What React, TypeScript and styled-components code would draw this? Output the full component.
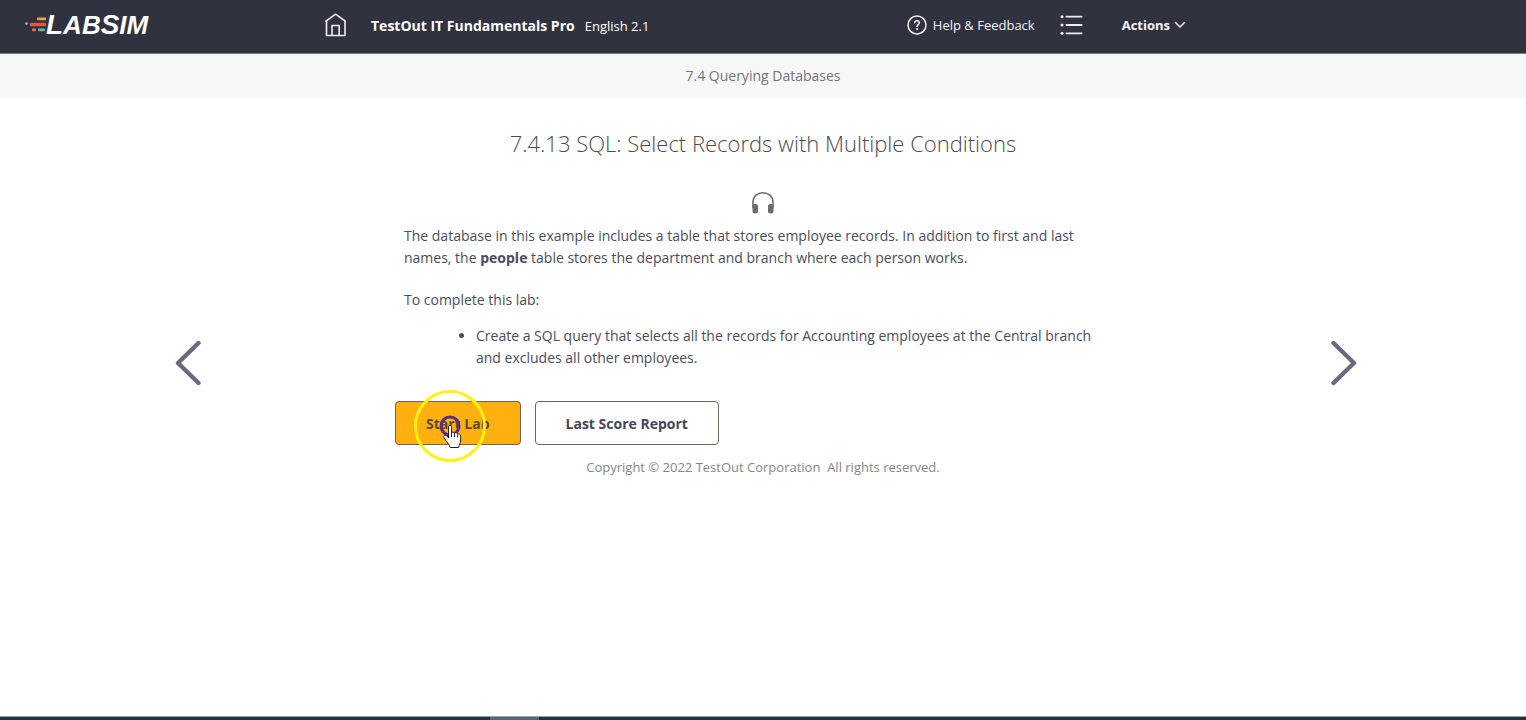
import React from "react";
import styled, { createGlobalStyle } from "styled-components";

const GlobalStyle = createGlobalStyle`
  *, *::before, *::after { box-sizing: border-box; }
  body {
    margin: 0;
    background: #fff;
    color: #4a4c5c;
    font-family: "Open Sans", "Noto Sans", sans-serif;
    font-size: 14px;
  }
  h1, h2, p, ul { margin: 0; font-weight: inherit; }
  button { font: inherit; color: inherit; cursor: pointer; }
  svg { display: block; flex: none; }
`;

const Page = styled.div`
  min-height: 100vh;
  display: flex;
  flex-direction: column;
`;

const TopBar = styled.header`
  display: grid;
  grid-template-columns: 1fr minmax(auto, 876px) 1fr;
  align-items: center;
  height: 54px;
  padding-bottom: 3px;
  background: #31323f;
  border-bottom: 1px solid #77787f;
  color: #fff;
`;

const Brand = styled.a`
  display: flex;
  align-items: center;
  padding-left: 24px;
  color: #fff;
  text-decoration: none;
`;

const Wordmark = styled.span`
  font-family: "Liberation Sans", Arial, sans-serif;
  font-size: 26px;
  font-style: italic;
  font-weight: 700;
  line-height: 36px;
`;

const BigLetter = styled.span`
  font-size: 28px;
`;

const Nav = styled.nav`
  display: flex;
  align-items: center;
  padding-right: 15px;
`;

const NavLink = styled.a`
  display: flex;
  align-items: center;
  gap: 6px;
  color: #f4f4f6;
  font-size: 13px;
  text-decoration: none;
`;

const CourseTitle = styled.div`
  display: flex;
  align-items: baseline;
  gap: 10px;
  margin-left: 24px;
  margin-right: auto;
  white-space: nowrap;
  font-size: 13px;
`;

const CourseName = styled.strong`
  font-size: 14px;
  font-weight: 700;
`;

const BarButton = styled.button<{ $gap: number }>`
  display: flex;
  align-items: center;
  gap: 4px;
  margin-left: ${({ $gap }) => $gap}px;
  padding: 0;
  border: 0;
  background: none;
  color: #f4f4f6;
  font-size: 13px;
  font-weight: 700;
`;

const SectionBar = styled.div`
  display: flex;
  justify-content: center;
  height: 44px;
  background: #f7f7f7;
  color: #73747a;
  line-height: 44px;
`;

const Stage = styled.main`
  flex: 1;
  display: grid;
  grid-template-columns: 1fr minmax(auto, 736px) 1fr;
  align-items: start;
`;

const Arrow = styled.button<{ $side: "left" | "right" }>`
  justify-self: ${({ $side }) => ($side === "left" ? "start" : "end")};
  margin: 242px ${({ $side }) => ($side === "right" ? "168px" : "0")} 0
    ${({ $side }) => ($side === "left" ? "174px" : "0")};
  padding: 0;
  border: 0;
  background: none;
  color: #686b7d;
`;

const Lesson = styled.article`
  display: flex;
  flex-direction: column;
`;

const Title = styled.h1`
  margin-top: 30px;
  text-align: center;
  font-size: 22px;
  font-weight: 300;
  line-height: 30px;
  color: #4b4b50;
`;

const AudioButton = styled.button`
  align-self: center;
  margin-top: 33px;
  padding: 0;
  border: 0;
  background: none;
  color: #6b6c72;
`;

const Body = styled.div`
  padding: 10px 20px 0 9px;
  line-height: 22px;
`;

const Paragraph = styled.p`
  margin-bottom: 20px;
`;

const Tasks = styled.ul`
  margin-top: -6px;
  padding-left: 72px;
`;

const ButtonRow = styled.div`
  display: flex;
  gap: 14px;
  margin-top: 32px;
`;

const ActionButton = styled.button<{ $primary?: boolean }>`
  position: relative;
  height: 44px;
  padding: 0 30px;
  border: 1px solid #6b6657;
  border-radius: 4px;
  background: ${({ $primary }) => ($primary ? "#fdb010" : "#fff")};
  color: ${({ $primary }) => ($primary ? "#5b4a30" : "#44465a")};
  font-weight: 700;
`;

const Pointer = styled.svg`
  position: absolute;
  left: 16px;
  top: -15px;
  pointer-events: none;
`;

const Copyright = styled.p`
  margin-top: 13px;
  text-align: center;
  font-size: 13px;
  line-height: 18px;
  color: #85868b;
  white-space: pre-wrap;
`;

const Taskbar = styled.footer`
  display: flex;
  height: 4px;
  padding-left: 490px;
  background: #203142;
  border-top: 1px solid #9aa2ac;
`;

const TaskbarItem = styled.span`
  width: 49px;
  background: #5b6474;
`;

const LogoStreaks = () => (
  <svg width="22" height="24" viewBox="0 0 22 24" aria-hidden="true">
    <circle cx="2.5" cy="10.5" r="1.3" fill="#8fc4d8" />
    <rect x="13" y="4.5" width="10" height="2.8" rx="1" fill="#e8a33a" />
    <rect x="6" y="9.8" width="16" height="3.4" rx="1" fill="#e8563a" />
    <rect x="8" y="15.5" width="4" height="2.8" rx="1" fill="#e8704a" />
    <rect x="14" y="15.5" width="7" height="2.8" rx="1" fill="#63b79d" />
  </svg>
);

const HomeIcon = () => (
  <svg width="22" height="24" viewBox="0 0 22 24" fill="none" stroke="#f0f0f3" strokeWidth="1.6" strokeLinejoin="round" strokeLinecap="round">
    <path d="M1 8.2 10.6 1.2 20.2 8.2" />
    <path d="M1.5 8V22.5H20V8" />
    <path d="M7 22.3V12.5H14.2V22.3" />
  </svg>
);

const HelpIcon = () => (
  <svg width="20" height="20" viewBox="0 0 20 20" fill="none" stroke="#f0f0f3" strokeWidth="1.5" strokeLinecap="round">
    <circle cx="10" cy="10" r="9" />
    <path d="M7.7 7.8C7.8 4.9 12.3 5 12.3 7.7C12.3 9.6 10 9.6 10 11.5" />
    <circle cx="10" cy="14" r="0.5" fill="#f0f0f3" strokeWidth="1" />
  </svg>
);

const ListIcon = () => (
  <svg width="24" height="20" viewBox="0 0 24 20" fill="#f0f0f3">
    {[1.7, 10, 18.3].map((y) => (
      <g key={y}>
        <circle cx="2" cy={y} r="1.5" />
        <rect x="5.5" y={y - 0.9} width="17" height="1.8" rx="0.9" />
      </g>
    ))}
  </svg>
);

const ChevronDown = () => (
  <svg width="12" height="8" viewBox="0 0 12 8" fill="none" stroke="#f0f0f3" strokeWidth="1.5" strokeLinecap="round" strokeLinejoin="round">
    <path d="M1.5 1.5 6 6 10.5 1.5" />
  </svg>
);

const Chevron = ({ d }: { d: string }) => (
  <svg width="28" height="46" viewBox="0 0 28 46" fill="none" stroke="currentColor" strokeWidth="4.4" strokeLinecap="round" strokeLinejoin="round">
    <path d={d} />
  </svg>
);

const Headphones = () => (
  <svg width="24" height="24" viewBox="0 0 24 24" fill="currentColor">
    <path d="M2 17V11.5C2 -1.5 22 -1.5 22 11.5V17" fill="none" stroke="currentColor" strokeWidth="1.6" />
    <rect x="1.5" y="13" width="5.5" height="9.5" rx="2.2" />
    <rect x="17" y="13" width="5.5" height="9.5" rx="2.2" />
  </svg>
);

const HandPointer = () => (
  <Pointer width="76" height="78" viewBox="0 0 76 78" fill="none" aria-hidden="true">
    <circle cx="38" cy="39" r="34.5" stroke="#fff116" strokeWidth="3" />
    <circle cx="38" cy="39" r="9" stroke="#5a2a8c" strokeWidth="3" />
    <path
      d="M37 38.5C38.8 38 39.5 39 39.5 40.5V46C39.8 44.6 42.4 44.7 42.5 46.4C43.3 45.2 45.6 45.6 45.6 47.3C46.6 46.4 48.6 47 48.6 49V54C48.6 56 47 57.5 46.7 60.5H38.2C37.6 57.6 34 54.4 32 50.5C31 48.4 33.6 47.4 35 49L36.5 51V40C36.5 39 36.6 38.7 37 38.5Z"
      fill="#fff"
      stroke="#222"
      strokeWidth="1"
      strokeLinejoin="round"
    />
    <path d="M39.5 46V50M42.5 46.5V50M45.6 47.5V50.5" stroke="#222" strokeWidth="1" />
  </Pointer>
);

export default function App() {
  return (
    <>
      <GlobalStyle />
      <Page>
        <TopBar>
          <Brand href="#">
            <LogoStreaks />
            <Wordmark>
              <BigLetter>L</BigLetter>AB<BigLetter>S</BigLetter>IM
            </Wordmark>
          </Brand>
          <Nav>
            <NavLink href="#" aria-label="Home">
              <HomeIcon />
            </NavLink>
            <CourseTitle>
              <CourseName>TestOut IT Fundamentals Pro</CourseName>
              <span>English 2.1</span>
            </CourseTitle>
            <NavLink href="#">
              <HelpIcon />
              Help &amp; Feedback
            </NavLink>
            <BarButton $gap={25} aria-label="Outline">
              <ListIcon />
            </BarButton>
            <BarButton $gap={38}>
              Actions
              <ChevronDown />
            </BarButton>
          </Nav>
        </TopBar>
        <SectionBar>7.4 Querying Databases</SectionBar>
        <Stage>
          <Arrow $side="left" aria-label="Previous">
            <Chevron d="M24.5 3 4 23 24.5 43" />
          </Arrow>
          <Lesson>
            <Title>7.4.13 SQL: Select Records with Multiple Conditions</Title>
            <AudioButton aria-label="Listen">
              <Headphones />
            </AudioButton>
            <Body>
              <Paragraph>
                The database in this example includes a table that stores employee records. In addition to first and last
                names, the <b>people</b> table stores the department and branch where each person works.
              </Paragraph>
              <Paragraph>To complete this lab:</Paragraph>
              <Tasks>
                <li>
                  Create a SQL query that selects all the records for Accounting employees at the Central branch and
                  excludes all other employees.
                </li>
              </Tasks>
            </Body>
            <ButtonRow>
              <ActionButton $primary>
                Start Lab
                <HandPointer />
              </ActionButton>
              <ActionButton>Last Score Report</ActionButton>
            </ButtonRow>
            <Copyright>{"Copyright © 2022 TestOut Corporation  All rights reserved."}</Copyright>
          </Lesson>
          <Arrow $side="right" aria-label="Next">
            <Chevron d="M3.5 3 24 23 3.5 43" />
          </Arrow>
        </Stage>
        <Taskbar>
          <TaskbarItem />
        </Taskbar>
      </Page>
    </>
  );
}
